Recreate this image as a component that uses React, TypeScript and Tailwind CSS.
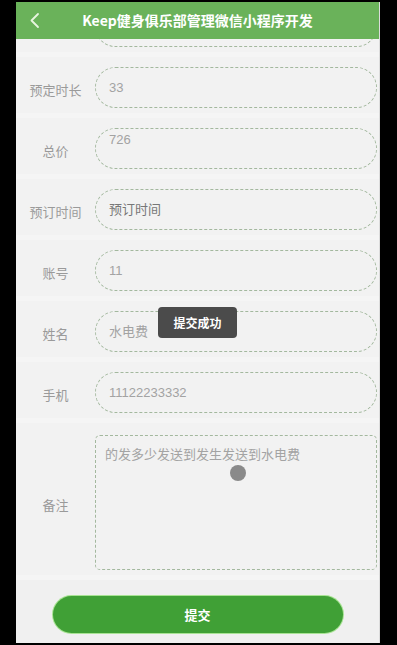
import React from "react";

const font = { fontFamily: '"Noto Sans CJK SC", "Liberation Sans", sans-serif' };

function Row({ label, value, dark, top }: { label: string; value: string; dark?: boolean; top?: boolean }) {
  return (
    <div className="relative flex h-[61px] items-start bg-[#f2f2f2] pt-[10px]">
      <div className="absolute bottom-0 left-0 right-0 h-[5px] bg-[#f5f5f5]" />
      <div className="flex h-[41px] w-[79px] shrink-0 items-center justify-center pt-[4px] text-[13px] text-[#9a9a9a]">{label}</div>
      <div
        className={`relative mr-[2px] flex h-[41px] flex-1 rounded-[21px] border border-dashed border-[#a3b89e] pl-[13px] text-[13px] ${
          top ? "items-start pt-[1px]" : "items-center"
        } ${dark ? "text-[#777]" : "text-[#a3a3a3]"}`}
        style={{ fontFamily: '"Liberation Sans", "Noto Sans CJK SC", sans-serif' }}
      >
        {value}
      </div>
    </div>
  );
}

export default function App() {
  return (
    <div className="h-[645px] w-[397px] overflow-hidden bg-black pt-[2px]" style={font}>
      <div className="relative ml-[16px] flex h-[641px] w-[364px] flex-col overflow-hidden border-r border-[#dcdcdc] bg-[#f2f2f2]">
        <div className="relative z-10 flex h-[37px] shrink-0 items-center justify-center bg-[#6ab25a]">
          <svg className="absolute left-[12px] top-[10px]" width="14" height="17" viewBox="0 0 14 17">
            <path d="M10 2 L3.5 8.5 L10 15" fill="none" stroke="#e8f5e0" strokeWidth="1.8" strokeLinecap="round" strokeLinejoin="round" />
          </svg>
          <span className="text-[14px] font-bold text-white">Keep健身俱乐部管理微信小程序开发</span>
        </div>
        <div className="h-[18px] shrink-0 overflow-hidden">
          <div className="mt-[-43px]">
            <Row label="" value="" />
          </div>
        </div>
        <Row label="预定时长" value="33" />
        <Row label="总价" value="726" top />
        <Row label="预订时间" value="预订时间" dark />
        <Row label="账号" value="11" />
        <Row label="姓名" value="水电费" />
        <Row label="手机" value="11122233332" />
        <div className="relative flex h-[157px] shrink-0 items-start bg-[#f2f2f2] pt-[12px]">
          <div className="absolute bottom-0 left-0 right-0 h-[5px] bg-[#f5f5f5]" />
          <div className="flex h-[135px] w-[79px] shrink-0 items-center justify-center pt-[4px] text-[13px] text-[#9a9a9a]">备注</div>
          <div className="relative mr-[2px] h-[135px] flex-1 rounded-[5px] border border-dashed border-[#a3b89e] pl-[9px] pt-[9px] text-[13px] leading-[18px] text-[#a3a3a3]">
            的发多少发送到发生发送到水电费
          </div>
        </div>
        <div className="flex flex-1 items-start justify-center bg-[#f0f0f0] pt-[16px]">
          <button className="flex h-[37px] w-[290px] items-center justify-center rounded-[19px] bg-[#40a036] text-[13px] font-bold text-white shadow-[0_0_0_1px_#a8e394]">
            提交
          </button>
        </div>
        <div className="absolute left-[142px] top-[305px] z-10 flex h-[31px] w-[79px] items-center justify-center rounded-[4px] bg-[#4b4b4b] text-[12px] font-bold text-white">
          提交成功
        </div>
        <div className="absolute left-[214px] top-[463px] z-10 h-[16px] w-[16px] rounded-full bg-[#8a8a8a]" />
      </div>
    </div>
  );
}
